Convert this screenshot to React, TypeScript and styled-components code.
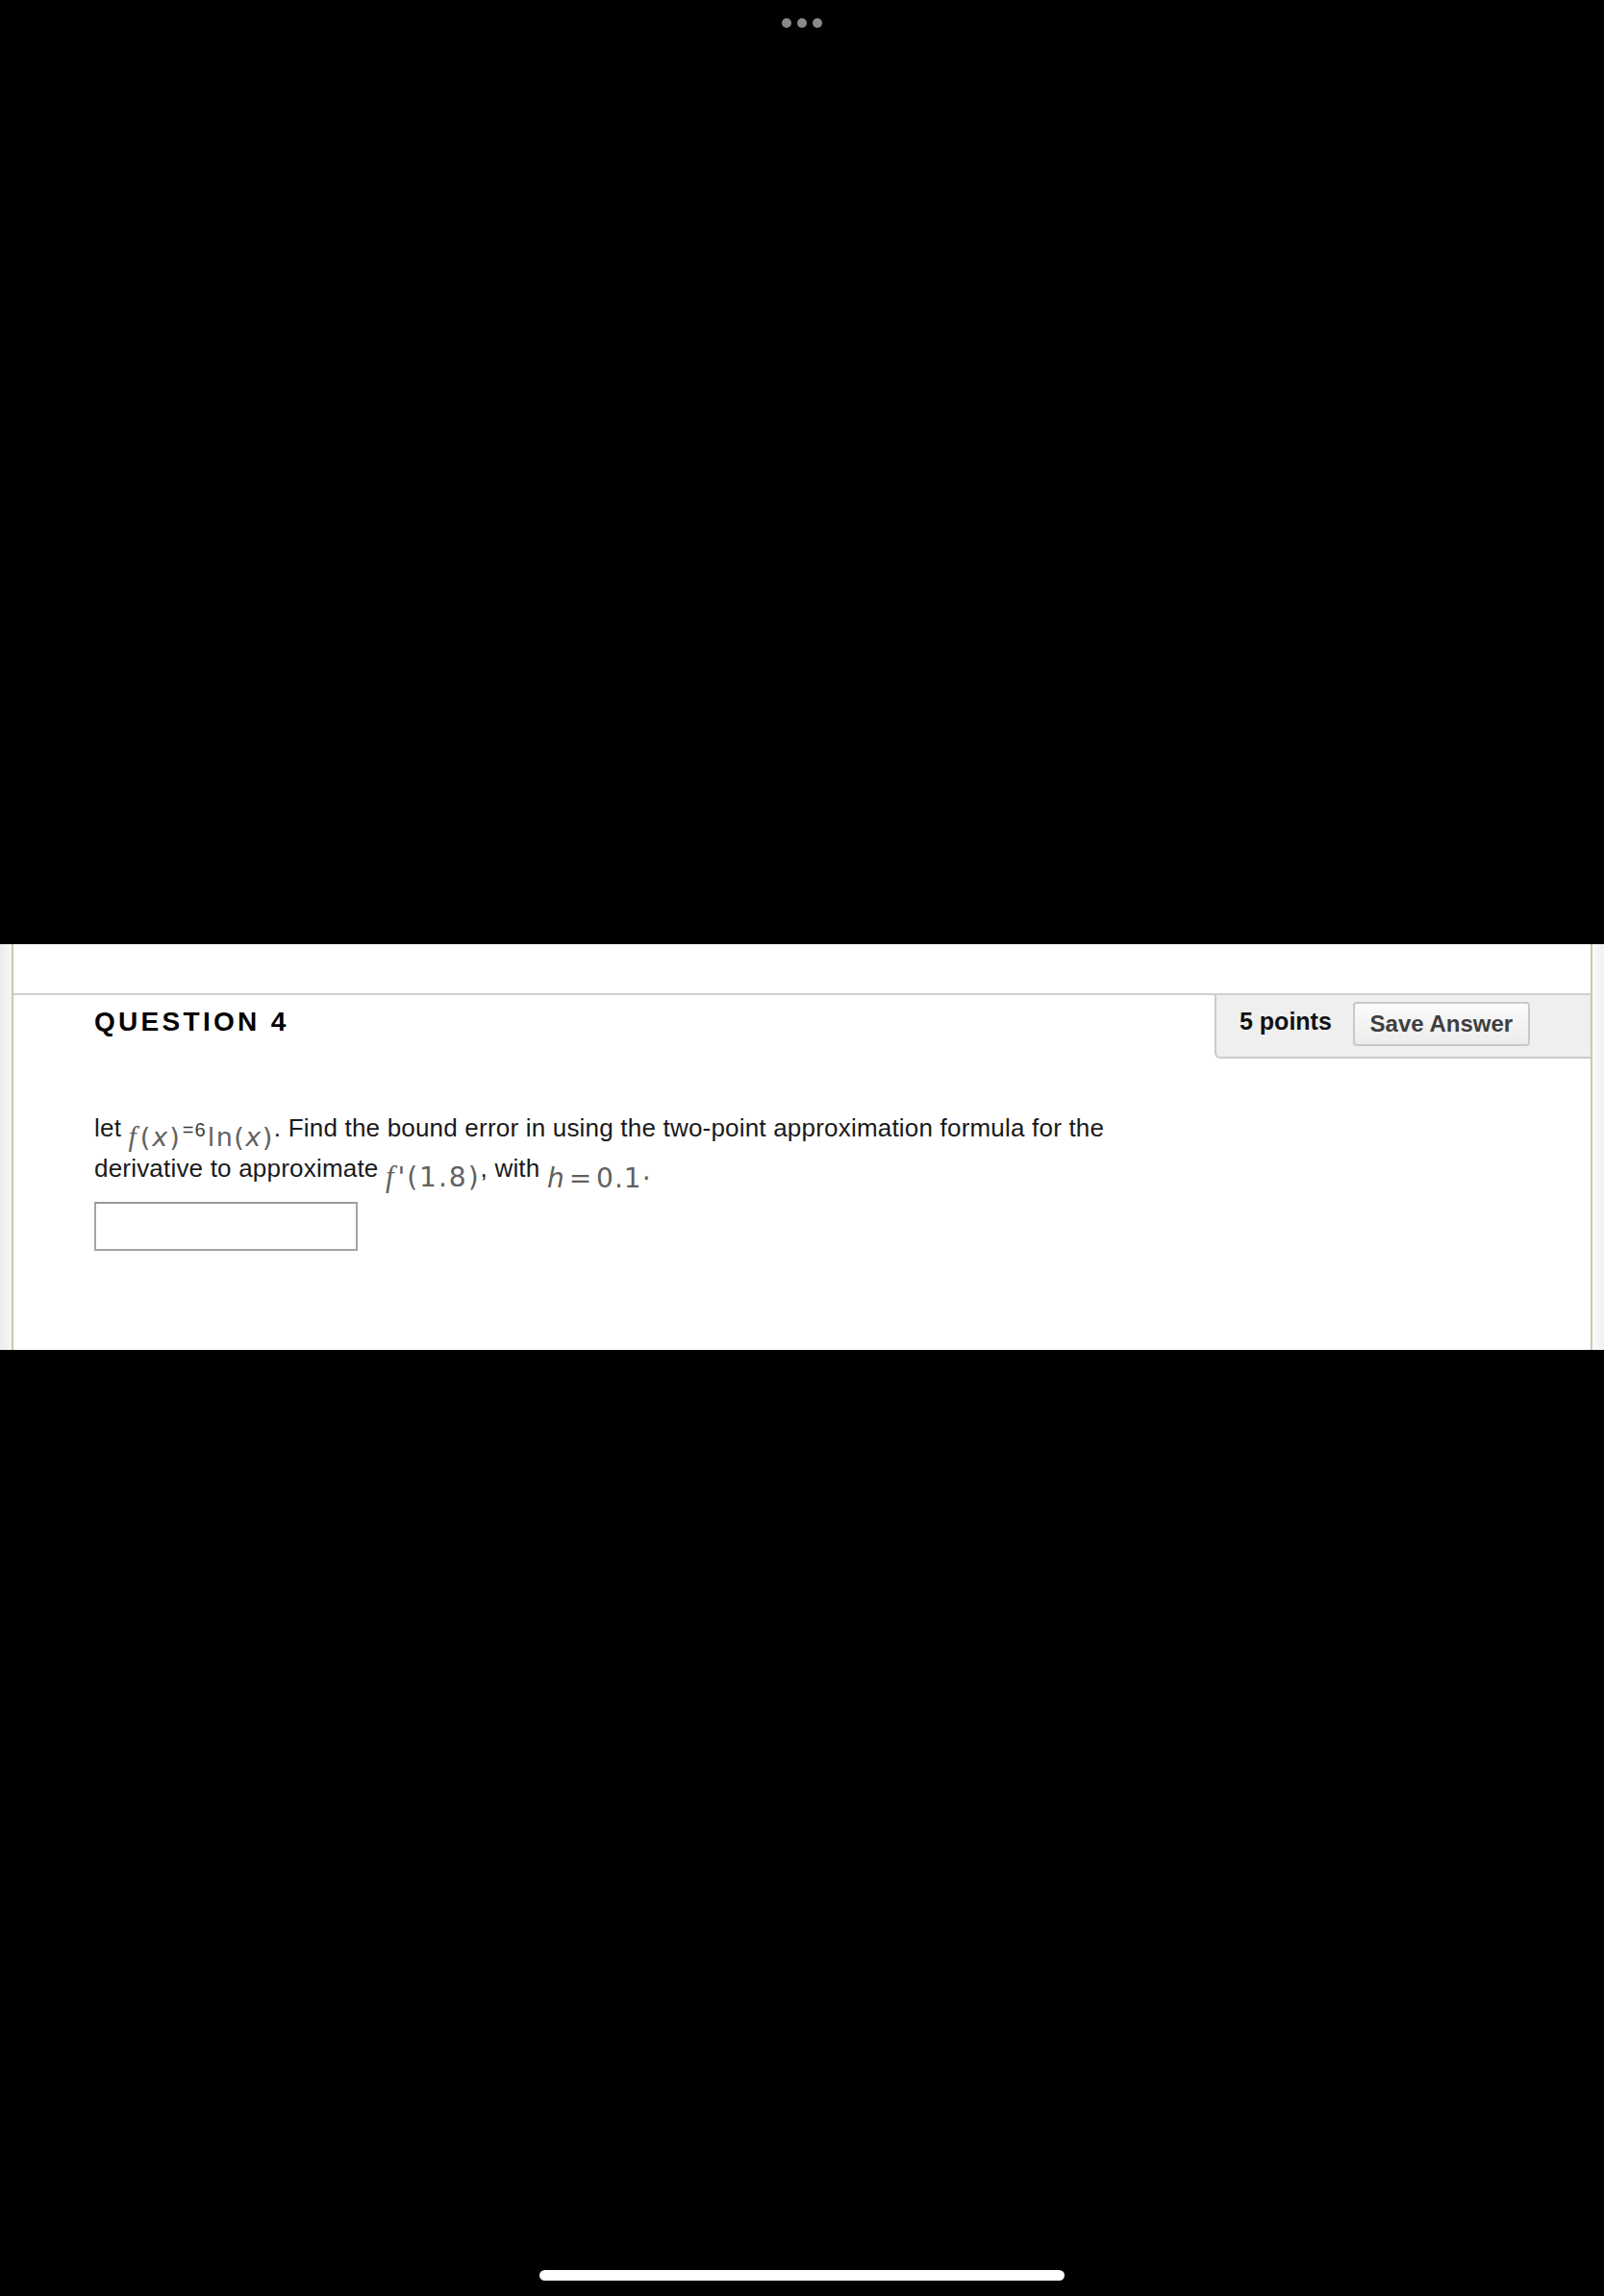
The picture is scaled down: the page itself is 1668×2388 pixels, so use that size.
import React from "react";
import styled, { createGlobalStyle } from "styled-components";

const GlobalStyle = createGlobalStyle`
  html, body {
    margin: 0;
    padding: 0;
    background: #000;
  }
  body {
    font-family: "Liberation Sans", Arial, Helvetica, sans-serif;
  }
`;

const Screen = styled.div`
  width: 1668px;
  height: 2388px;
  display: flex;
  flex-direction: column;
  background: #000;
  overflow: hidden;
`;

const TopArea = styled.div`
  height: 982px;
  box-sizing: border-box;
  padding-top: 19px;
  display: flex;
  justify-content: center;
  align-items: flex-start;
`;

const Dots = styled.div`
  display: flex;
  gap: 6px;
`;

const Dot = styled.span`
  width: 10px;
  height: 10px;
  border-radius: 50%;
  background: #8a8a8a;
`;

const Panel = styled.div`
  height: 422px;
  display: flex;
  background: #fff;
`;

const Gutter = styled.div<{ $side: "left" | "right" }>`
  width: 12px;
  background: ${(p) =>
    p.$side === "left"
      ? "linear-gradient(90deg, #ececec 0%, #f7f7f7 100%)"
      : "linear-gradient(90deg, #f9f9f9 0%, #f1f1f1 100%)"};
`;

const Frame = styled.div`
  flex: 1;
  display: flex;
  flex-direction: column;
  border-left: 2px solid #cac7b3;
  border-right: 2px solid #cac7b3;
  padding-top: 51px;
  min-width: 0;
`;

const Header = styled.div`
  display: flex;
  justify-content: space-between;
  align-items: flex-start;
  border-top: 2px solid #cfcfcf;
  padding-left: 84px;
`;

const Title = styled.h2`
  margin: 14px 0 0;
  font-size: 28px;
  line-height: 28px;
  font-weight: 700;
  letter-spacing: 3.3px;
  color: #000;
`;

const PointsBox = styled.div`
  width: 391px;
  height: 66px;
  box-sizing: border-box;
  display: flex;
  align-items: flex-start;
  gap: 22px;
  padding: 7px 0 0 24px;
  background: #efefef;
  border-left: 2px solid #cbcbcb;
  border-bottom: 2px solid #cbcbcb;
  border-bottom-left-radius: 6px;
`;

const Points = styled.span`
  margin-top: 8px;
  font-size: 25px;
  line-height: 25px;
  font-weight: 700;
  color: #111;
`;

const SaveButton = styled.button`
  width: 184px;
  height: 46px;
  box-sizing: border-box;
  border: 2px solid #c9c9c9;
  border-radius: 4px;
  background: linear-gradient(180deg, #fbfbfb 0%, #ececec 100%);
  font-family: "Liberation Sans", Arial, sans-serif;
  font-size: 24px;
  font-weight: 700;
  color: #3f3f3f;
  padding: 0;
  cursor: pointer;
`;

const Body = styled.div`
  padding-left: 84px;
  display: flex;
  flex-direction: column;
  align-items: flex-start;
`;

const Prompt = styled.p`
  margin: 52px 0 0;
  font-size: 26px;
  line-height: 40px;
  letter-spacing: 0.2px;
  color: #1a1a1a;
  white-space: nowrap;
`;

const MathInline = styled.span<{ $drop: number; $size?: number; $track?: number }>`
  font-family: "DejaVu Sans", "Liberation Sans", sans-serif;
  font-size: ${(p) => p.$size ?? 27}px;
  color: #616161;
  line-height: 0;
  vertical-align: -${(p) => p.$drop}px;
  letter-spacing: ${(p) => p.$track ?? 1}px;
`;

const Fn = styled.i`
  font-family: "Liberation Serif", "DejaVu Serif", serif;
  font-style: italic;
  font-size: 1.1em;
  margin-right: 2px;
`;

const Var = styled.i`
  font-style: italic;
`;

const Op = styled.span`
  margin: 0 4px;
`;

const SmallOp = styled.span`
  font-family: "Liberation Sans", Arial, sans-serif;
  font-size: 20px;
  color: #3a3a3a;
  letter-spacing: 1px;
  margin: 0 1px;
`;

const AnswerInput = styled.input`
  margin-top: 15px;
  width: 274px;
  height: 51px;
  box-sizing: border-box;
  border: 2px solid #a4a4a4;
  border-top-color: #999;
  background: #fff;
  border-radius: 0;
  outline: none;
  font-size: 22px;
  padding: 0 8px;
`;

const BottomArea = styled.div`
  flex: 1;
  display: flex;
  justify-content: center;
  align-items: flex-end;
  padding-bottom: 16px;
`;

const HomeBar = styled.div`
  width: 546px;
  height: 11px;
  border-radius: 6px;
  background: #fff;
`;

export default function App() {
  return (
    <>
      <GlobalStyle />
      <Screen>
        <TopArea>
          <Dots>
            <Dot />
            <Dot />
            <Dot />
          </Dots>
        </TopArea>
        <Panel>
          <Gutter $side="left" />
          <Frame>
            <Header>
              <Title>QUESTION 4</Title>
              <PointsBox>
                <Points>5 points</Points>
                <SaveButton type="button">Save Answer</SaveButton>
              </PointsBox>
            </Header>
            <Body>
              <Prompt>
                let{" "}
                <MathInline $drop={10} $track={2}>
                  <Fn>f</Fn>(<Var>x</Var>)
                </MathInline>
                <SmallOp>=6</SmallOp>
                <MathInline $drop={10} $track={1.5}>
                  ln(<Var>x</Var>)
                </MathInline>
                . Find the bound error in using the two-point approximation formula for the
                <br />
                derivative to approximate{" "}
                <MathInline $drop={10} $size={28} $track={2}>
                  <Fn>f</Fn>'(1.8)
                </MathInline>
                , with{" "}
                <MathInline $drop={11} $size={28} $track={1}>
                  <Var>h</Var>
                  <Op>=</Op>0.1·
                </MathInline>
              </Prompt>
              <AnswerInput type="text" aria-label="answer" />
            </Body>
          </Frame>
          <Gutter $side="right" />
        </Panel>
        <BottomArea>
          <HomeBar />
        </BottomArea>
      </Screen>
    </>
  );
}
